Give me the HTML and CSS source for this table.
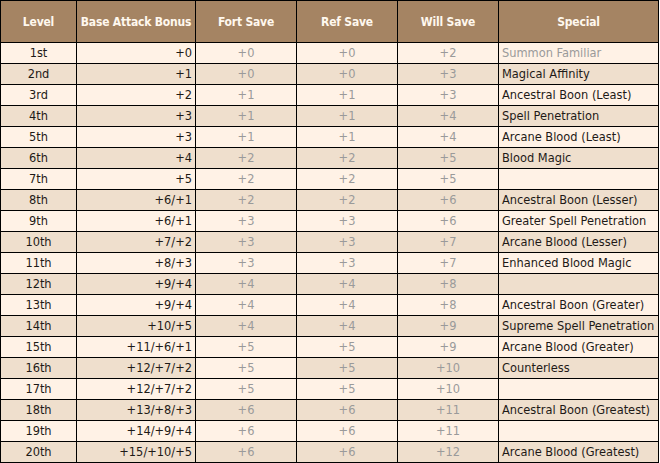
FILE: index.html
```html
<!DOCTYPE html>
<html>
<head>
<meta charset="utf-8">
<link rel="stylesheet" href="styles.css">
</head>
<body>
<table class="prog">
<colgroup>
<col class="c-lvl"><col class="c-bab"><col class="c-sv"><col class="c-sv"><col class="c-sv"><col class="c-sp">
</colgroup>
<thead>
<tr><th>Level</th><th>Base Attack Bonus</th><th>Fort Save</th><th>Ref Save</th><th>Will Save</th><th>Special</th></tr>
</thead>
<tbody>
<tr><td class="lvl">1st</td><td class="bab">+0</td><td class="sv">+0</td><td class="sv">+0</td><td class="sv">+2</td><td class="sp muted">Summon Familiar</td></tr>
<tr><td class="lvl">2nd</td><td class="bab">+1</td><td class="sv">+0</td><td class="sv">+0</td><td class="sv">+3</td><td class="sp">Magical Affinity</td></tr>
<tr><td class="lvl">3rd</td><td class="bab">+2</td><td class="sv">+1</td><td class="sv">+1</td><td class="sv">+3</td><td class="sp">Ancestral Boon (Least)</td></tr>
<tr><td class="lvl">4th</td><td class="bab">+3</td><td class="sv">+1</td><td class="sv">+1</td><td class="sv">+4</td><td class="sp">Spell Penetration</td></tr>
<tr><td class="lvl">5th</td><td class="bab">+3</td><td class="sv">+1</td><td class="sv">+1</td><td class="sv">+4</td><td class="sp">Arcane Blood (Least)</td></tr>
<tr><td class="lvl">6th</td><td class="bab">+4</td><td class="sv">+2</td><td class="sv">+2</td><td class="sv">+5</td><td class="sp">Blood Magic</td></tr>
<tr><td class="lvl">7th</td><td class="bab">+5</td><td class="sv">+2</td><td class="sv">+2</td><td class="sv">+5</td><td class="sp"></td></tr>
<tr><td class="lvl">8th</td><td class="bab">+6/+1</td><td class="sv">+2</td><td class="sv">+2</td><td class="sv">+6</td><td class="sp">Ancestral Boon (Lesser)</td></tr>
<tr><td class="lvl">9th</td><td class="bab">+6/+1</td><td class="sv">+3</td><td class="sv">+3</td><td class="sv">+6</td><td class="sp">Greater Spell Penetration</td></tr>
<tr><td class="lvl">10th</td><td class="bab">+7/+2</td><td class="sv">+3</td><td class="sv">+3</td><td class="sv">+7</td><td class="sp">Arcane Blood (Lesser)</td></tr>
<tr><td class="lvl">11th</td><td class="bab">+8/+3</td><td class="sv">+3</td><td class="sv">+3</td><td class="sv">+7</td><td class="sp">Enhanced Blood Magic</td></tr>
<tr><td class="lvl">12th</td><td class="bab">+9/+4</td><td class="sv">+4</td><td class="sv">+4</td><td class="sv">+8</td><td class="sp"></td></tr>
<tr><td class="lvl">13th</td><td class="bab">+9/+4</td><td class="sv">+4</td><td class="sv">+4</td><td class="sv">+8</td><td class="sp">Ancestral Boon (Greater)</td></tr>
<tr><td class="lvl">14th</td><td class="bab">+10/+5</td><td class="sv">+4</td><td class="sv">+4</td><td class="sv">+9</td><td class="sp">Supreme Spell Penetration</td></tr>
<tr><td class="lvl">15th</td><td class="bab">+11/+6/+1</td><td class="sv">+5</td><td class="sv">+5</td><td class="sv">+9</td><td class="sp">Arcane Blood (Greater)</td></tr>
<tr><td class="lvl">16th</td><td class="bab">+12/+7/+2</td><td class="sv hl">+5</td><td class="sv">+5</td><td class="sv">+10</td><td class="sp">Counterless</td></tr>
<tr><td class="lvl">17th</td><td class="bab">+12/+7/+2</td><td class="sv">+5</td><td class="sv">+5</td><td class="sv">+10</td><td class="sp"></td></tr>
<tr><td class="lvl">18th</td><td class="bab">+13/+8/+3</td><td class="sv">+6</td><td class="sv">+6</td><td class="sv">+11</td><td class="sp">Ancestral Boon (Greatest)</td></tr>
<tr><td class="lvl">19th</td><td class="bab">+14/+9/+4</td><td class="sv">+6</td><td class="sv">+6</td><td class="sv">+11</td><td class="sp"></td></tr>
<tr><td class="lvl">20th</td><td class="bab">+15/+10/+5</td><td class="sv">+6</td><td class="sv">+6</td><td class="sv">+12</td><td class="sp">Arcane Blood (Greatest)</td></tr>
</tbody>
</table>
</body>
</html>
```

FILE: styles.css
```css
html, body {
  margin: 0;
  padding: 0;
  background: #ffffff;
}

.prog {
  border-collapse: collapse;
  table-layout: fixed;
  width: 658px;
  font-family: "DejaVu Sans Condensed", "DejaVu Sans", sans-serif;
  font-size: 12.7px;
  color: #1e1a17;
}

.c-lvl { width: 76px; }
.c-bab { width: 119px; }
.c-sv { width: 101px; }
.c-sp { width: 160px; }

.prog th,
.prog td {
  border: 1px solid #000;
  padding: 0 3px;
  white-space: nowrap;
  overflow: hidden;
}

.prog th {
  height: 41px;
  padding: 0 1px;
  background: #a58463;
  color: #fff8ee;
  font-weight: bold;
  font-size: 12px;
  letter-spacing: -0.2px;
  text-align: center;
}

.prog td {
  height: 20px;
  line-height: 20px;
}

.prog tbody tr:nth-child(odd) td { background: #fff2e6; }
.prog tbody tr:nth-child(even) td { background: #efdfcd; }
.prog tbody tr td.hl { background: #fff2e6; }

.lvl { text-align: center; }
.bab { text-align: right; }
.sv { text-align: center; color: #9a9a9a; }
.sp { text-align: left; }
.muted { color: #9a9a9a; }
```
